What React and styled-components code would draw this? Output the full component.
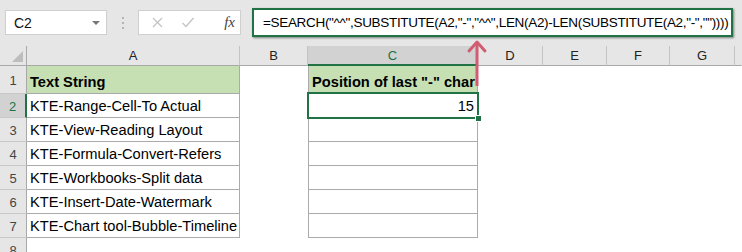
import React from 'react'
import styled, { createGlobalStyle } from 'styled-components'

const GREEN = '#217346'

const GlobalStyle = createGlobalStyle`
  html, body {
    margin: 0;
    padding: 0;
    background: #fff;
  }
  body {
    font-family: 'Liberation Sans', Arial, sans-serif;
    overflow: hidden;
  }
`

const Window = styled.div`
  position: relative;
  width: 742px;
  height: 252px;
  overflow: hidden;
  background: #fff;
`

const FormulaBar = styled.div`
  height: 46px;
  box-sizing: border-box;
  background: #e6e6e6;
  display: flex;
  align-items: flex-start;
  padding-left: 5px;
`

const NameBox = styled.div`
  margin-top: 10px;
  width: 102px;
  height: 25px;
  box-sizing: border-box;
  background: #fff;
  border: 1px solid #cfcfcf;
  display: flex;
  align-items: center;
  justify-content: space-between;
  padding: 0 6px 0 8px;
  font-size: 14px;
  color: #111;
`

const DropArrow = styled.span`
  width: 0;
  height: 0;
  border-left: 4px solid transparent;
  border-right: 4px solid transparent;
  border-top: 4px solid #777;
`

const Dots = styled.div`
  width: 31px;
  height: 45px;
  display: flex;
  flex-direction: column;
  align-items: center;
  justify-content: center;
  gap: 3px;
  span {
    width: 2px;
    height: 2px;
    background: #b4b4b4;
  }
`

const FxBox = styled.div`
  margin-top: 10px;
  width: 103px;
  height: 25px;
  box-sizing: border-box;
  background: #fff;
  border: 1px solid #cfcfcf;
  display: flex;
  align-items: center;
  padding: 0 5px 0 12px;
  gap: 17px;
`

const Fx = styled.span`
  margin-left: auto;
  font-family: 'Liberation Serif', 'Times New Roman', serif;
  font-style: italic;
  font-size: 15px;
  color: #444;
`

const FormulaInput = styled.div`
  margin-top: 8px;
  margin-left: 11px;
  width: 481px;
  height: 29px;
  box-sizing: border-box;
  background: #fff;
  border: 2px solid ${GREEN};
  box-shadow: 1px 1px 2px rgba(0, 0, 0, 0.45);
  display: flex;
  align-items: center;
  padding-left: 9px;
  font-size: 13.5px;
  letter-spacing: -0.32px;
  color: #000;
  white-space: nowrap;
  overflow: hidden;
`

const Grid = styled.div`
  display: grid;
  grid-template-columns: 27px 213px 68px 170px 65px 64px 63px 65px 1fr;
  grid-template-rows: 20px 28px repeat(7, 24px);
`

const Corner = styled.div`
  position: relative;
  background: #e6e6e6;
  border-right: 1px solid #a8a8a8;
  border-bottom: 1px solid #a8a8a8;
  box-sizing: border-box;
  &::after {
    content: '';
    position: absolute;
    right: 3px;
    bottom: 3px;
    width: 0;
    height: 0;
    border-left: 11px solid transparent;
    border-bottom: 11px solid #bdbdbd;
  }
`

const ColHeader = styled.div`
  box-sizing: border-box;
  background: ${p => (p.$active ? '#d2d2d2' : '#e6e6e6')};
  border-right: 1px solid ${p => (p.$last ? 'transparent' : '#c4c4c4')};
  border-bottom: ${p => (p.$active ? `2px solid ${GREEN}` : '1px solid #a8a8a8')};
  display: flex;
  align-items: center;
  justify-content: center;
  font-size: 13px;
  color: ${p => (p.$active ? GREEN : '#222')};
`

const RowHeader = styled.div`
  box-sizing: border-box;
  background: ${p => (p.$active ? '#d2d2d2' : '#e6e6e6')};
  border-right: ${p => (p.$active ? `2px solid ${GREEN}` : '1px solid #a8a8a8')};
  border-bottom: 1px solid #c8c8c8;
  display: flex;
  align-items: center;
  justify-content: center;
  padding-top: 2px;
  font-size: 13px;
  color: ${p => (p.$active ? GREEN : '#444')};
`

const Cell = styled.div`
  position: relative;
  box-sizing: border-box;
  background: ${p => (p.$fill ? '#c6e0b4' : '#fff')};
  border-bottom: 1px solid ${p => (p.$boxed ? '#ababab' : 'transparent')};
  border-right: 1px solid ${p => (p.$boxed ? '#ababab' : 'transparent')};
  border-left: ${p => (p.$leftEdge ? '1px solid #ababab' : 'none')};
  display: flex;
  align-items: flex-end;
  justify-content: ${p => (p.$right ? 'flex-end' : 'flex-start')};
  padding: 0 3px 3px 3px;
  font-size: 14.67px;
  font-weight: ${p => (p.$bold ? 700 : 400)};
  color: #000;
  white-space: nowrap;
  z-index: ${p => (p.$selected ? 2 : 0)};

  ${p =>
    p.$selected &&
    `
    &::after {
      content: '';
      position: absolute;
      left: -2px;
      top: -2px;
      right: -2px;
      bottom: -2px;
      border: 2px solid ${GREEN};
    }
    &::before {
      content: '';
      position: absolute;
      right: -5px;
      bottom: -5px;
      width: 5px;
      height: 5px;
      background: ${GREEN};
      border: 1px solid #fff;
      z-index: 3;
    }
  `}
`

const ArrowLayer = styled.svg`
  position: absolute;
  left: 0;
  top: 0;
  pointer-events: none;
  z-index: 5;
`

const columns = ['A', 'B', 'C', 'D', 'E', 'F', 'G']

const rows = [
  { a: 'Text String', c: 'Position of last "-" char', header: true },
  { a: 'KTE-Range-Cell-To Actual', c: '15' },
  { a: 'KTE-View-Reading Layout', c: '' },
  { a: 'KTE-Formula-Convert-Refers', c: '' },
  { a: 'KTE-Workbooks-Split data', c: '' },
  { a: 'KTE-Insert-Date-Watermark', c: '' },
  { a: 'KTE-Chart tool-Bubble-Timeline', c: '' },
]

export default function App() {
  return (
    <Window>
      <GlobalStyle />
      <FormulaBar>
        <NameBox>
          C2
          <DropArrow />
        </NameBox>
        <Dots>
          <span />
          <span />
          <span />
        </Dots>
        <FxBox>
          <svg width="13" height="13" viewBox="0 0 13 13">
            <path d="M2 2 L11 11 M11 2 L2 11" stroke="#c4c4c4" strokeWidth="1.3" fill="none" />
          </svg>
          <svg width="14" height="13" viewBox="0 0 14 13">
            <path d="M1.5 7 L5 10.5 L12.5 2" stroke="#c4c4c4" strokeWidth="1.4" fill="none" />
          </svg>
          <Fx>fx</Fx>
        </FxBox>
        <FormulaInput>
          =SEARCH("^^",SUBSTITUTE(A2,"-","^^",LEN(A2)-LEN(SUBSTITUTE(A2,"-",""))))
        </FormulaInput>
      </FormulaBar>

      <Grid>
        <Corner />
        {columns.map(c => (
          <ColHeader key={c} $active={c === 'C'}>
            {c}
          </ColHeader>
        ))}
        <ColHeader $last />

        {rows.map((r, i) => (
          <React.Fragment key={i}>
            <RowHeader $active={i === 1}>{i + 1}</RowHeader>
            <Cell $boxed $fill={r.header} $bold={r.header}>
              {r.a}
            </Cell>
            <Cell />
            <Cell
              $boxed
              $leftEdge
              $fill={r.header}
              $bold={r.header}
              $right={!r.header}
              $selected={i === 1}
            >
              {r.c}
            </Cell>
            <Cell />
            <Cell />
            <Cell />
            <Cell />
            <Cell />
          </React.Fragment>
        ))}

        <RowHeader>8</RowHeader>
      </Grid>

      <ArrowLayer width="742" height="252">
        <path d="M477 43 L477 86" stroke="#d05d72" strokeWidth="3" fill="none" />
        <path
          d="M469 51 L477 42 L485 51"
          stroke="#d05d72"
          strokeWidth="3"
          fill="none"
          strokeLinecap="round"
          strokeLinejoin="round"
        />
      </ArrowLayer>
    </Window>
  )
}
